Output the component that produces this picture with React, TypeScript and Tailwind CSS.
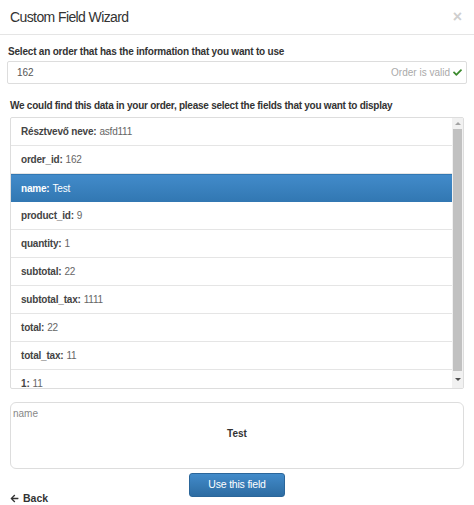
import { FaCheck, FaArrowLeft } from "react-icons/fa";

export default function App() {
  const fields = [
    { key: "Résztvevő neve", value: "asfd111" },
    { key: "order_id", value: "162" },
    { key: "name", value: "Test" },
    { key: "product_id", value: "9" },
    { key: "quantity", value: "1" },
    { key: "subtotal", value: "22" },
    { key: "subtotal_tax", value: "1111" },
    { key: "total", value: "22" },
    { key: "total_tax", value: "11" },
    { key: "1", value: "11" },
  ];
  const selected = 2;

  return (
    <div
      className="w-[474px] h-[505px] overflow-hidden bg-white text-[#333]"
      style={{ fontFamily: '"Liberation Sans", Arial, sans-serif' }}
    >
      {/* Header */}
      <div className="flex items-center justify-between h-[35px] px-[10px] border-b border-[#e5e5e5]">
        <h4 className="text-[14px] tracking-[-0.6px] leading-none">Custom Field Wizard</h4>
        <span className="text-[16px] font-bold text-[#cfcfcf] leading-none mr-[2px]">×</span>
      </div>

      <div className="px-[7px] pt-[7px]">
        <label className="block text-[10px] tracking-[-0.2px] font-bold px-[1px] h-[19px] leading-[19px]">
          Select an order that has the information that you want to use
        </label>
        <div className="flex items-center justify-between h-[23px] border border-[#ddd] rounded-[2px] px-[9px] text-[10px]">
          <span className="text-[#555]">162</span>
          <span className="flex items-center gap-[3px] text-[#aaa] -mr-[5px]">
            Order is valid <FaCheck className="text-[#3c8a2e] text-[9px]" />
          </span>
        </div>
      </div>

      <div className="px-[10px]">
        <p className="text-[10px] tracking-[-0.25px] font-bold mt-[16px] h-[17px] leading-[12px]">
          We could find this data in your order, please select the fields that you want to display
        </p>
        {/* Field list */}
        <div className="flex h-[272px] border border-[#ddd] rounded-[2px] overflow-hidden">
          <div className="flex-1 overflow-hidden">
            {fields.map((f, i) => (
              <div
                key={f.key}
                className={
                  i === selected
                    ? "h-[28px] flex items-center px-[10px] text-[10px] tracking-[-0.2px] text-white bg-gradient-to-b from-[#428bca] to-[#3278b3] border-y border-[#3278b3]"
                    : "h-[28px] flex items-center px-[10px] text-[10px] tracking-[-0.2px] text-[#666] border-b border-[#e5e5e5]"
                }
              >
                <span className={i === selected ? "font-bold text-white mr-[3px]" : "font-bold text-[#444] mr-[3px]"}>
                  {f.key}:
                </span>
                {f.value}
              </div>
            ))}
          </div>
          {/* Scrollbar */}
          <div className="w-[11px] flex flex-col bg-[#f1f1f1]">
            <div className="h-[11px] flex items-center justify-center">
              <span className="w-0 h-0 border-x-[3px] border-x-transparent border-b-[3px] border-b-[#a3a3a3]" />
            </div>
            <div className="mx-[1px] h-[242px] bg-[#c1c1c1]" />
            <div className="flex-1 flex items-center justify-center">
              <span className="w-0 h-0 border-x-[3px] border-x-transparent border-t-[3px] border-t-[#505050]" />
            </div>
          </div>
        </div>

        {/* Preview */}
        <div className="mt-[13px] h-[67px] border border-[#ddd] rounded-[6px] px-[2px] pt-[3px]">
          <div className="text-[10px] text-[#888]">name</div>
          <div className="text-center text-[10px] font-bold mt-[5px]">Test</div>
        </div>

        <div className="flex justify-center mt-[4px]">
          <button className="w-[96px] h-[24px] rounded-[3px] border border-[#2b669a] bg-gradient-to-b from-[#428bca] to-[#2d6ca2] text-white text-[10.5px] tracking-[-0.2px]">
            Use this field
          </button>
        </div>
      </div>
      <div className="flex items-center gap-[4px] px-[10px] -mt-[6px] text-[10.5px] font-bold">
        <FaArrowLeft className="text-[9px]" /> Back
      </div>
    </div>
  );
}
